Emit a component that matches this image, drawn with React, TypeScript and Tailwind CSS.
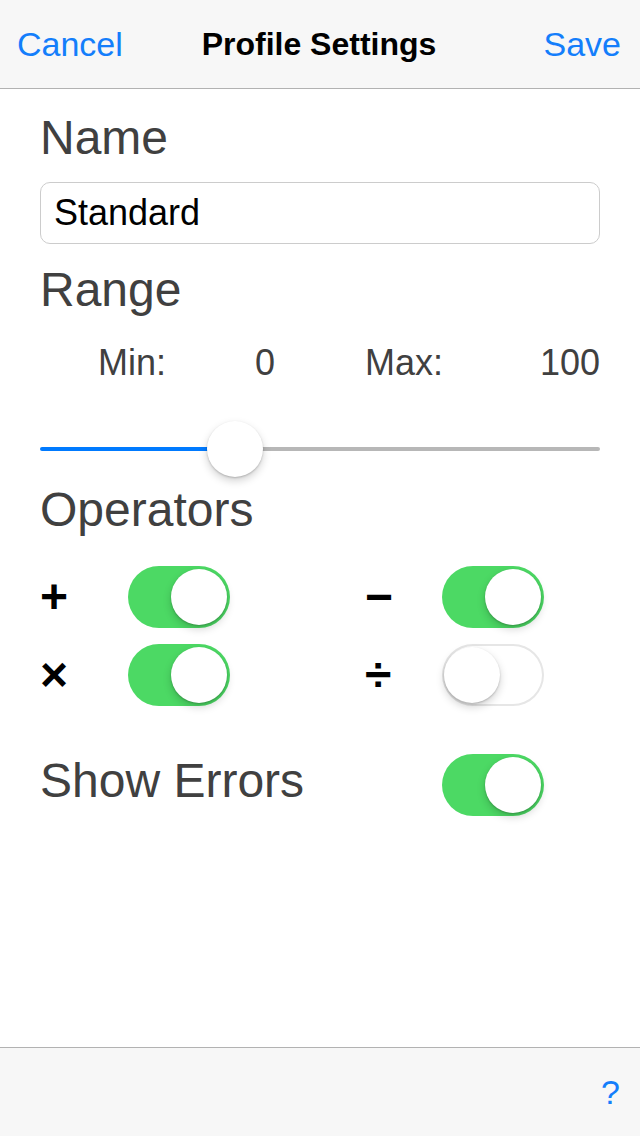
import React from "react"

type ToggleProps = { on: boolean }

function Toggle({ on }: ToggleProps) {
  return (
    <div
      className={`relative h-[62px] w-[102px] flex-shrink-0 rounded-full ${
        on ? "bg-[#4cd964]" : "bg-white shadow-[inset_0_0_0_2px_#e6e6e6]"
      }`}
    >
      <div
        className={`absolute top-[3px] h-[56px] w-[56px] rounded-full bg-white shadow-[0_4px_8px_rgba(0,0,0,0.18),0_1px_2px_rgba(0,0,0,0.2)] ${
          on ? "right-[3px]" : "left-[2px]"
        }`}
      />
    </div>
  )
}

function Symbol({ children }: { children: React.ReactNode }) {
  return (
    <span className="text-[48px] font-bold leading-none text-black">
      {children}
    </span>
  )
}

export default function App() {
  return (
    <div className="flex h-[1136px] w-[640px] flex-col bg-white font-['Liberation_Sans',Arial,sans-serif]">
      {/* Nav bar */}
      <header className="grid h-[89px] grid-cols-[1fr_auto_1fr] items-center border-b border-[#b2b2b2] bg-[#f7f7f7] px-[17px] pr-[19px]">
        <span className="text-[34px] text-[#147efb]">Cancel</span>
        <span className="text-[32px] font-bold text-black">
          Profile Settings
        </span>
        <span className="text-right text-[34px] text-[#147efb]">Save</span>
      </header>

      <main className="flex flex-1 flex-col px-[40px]">
        {/* Name */}
        <h2 className="mt-[25px] text-[48px] leading-none text-[#404040]">
          Name
        </h2>
        <div className="mt-[20px] flex h-[62px] items-center rounded-[10px] border border-[#cccccc] pl-[13px]">
          <span className="text-[36px] leading-none text-black">Standard</span>
        </div>

        {/* Range */}
        <h2 className="mt-[22px] text-[48px] leading-none text-[#404040]">
          Range
        </h2>
        <div className="mt-[31px] flex pl-[58px] text-[36px] leading-none text-[#404040]">
          <span className="w-[157px]">Min:</span>
          <span className="w-[110px]">0</span>
          <span className="flex-1">Max:</span>
          <span>100</span>
        </div>

        <div className="relative mt-[40px] flex h-[56px] items-center">
          <div className="h-[4px] w-[195px] rounded-l-full bg-[#007aff]" />
          <div className="h-[4px] flex-1 rounded-r-full bg-[#b7b7b7]" />
          <div className="absolute left-[167px] top-0 h-[56px] w-[56px] rounded-full bg-white shadow-[0_4px_8px_rgba(0,0,0,0.18),0_1px_2px_rgba(0,0,0,0.2)]" />
        </div>

        {/* Operators */}
        <h2 className="mt-[9px] text-[48px] leading-none text-[#404040]">
          Operators
        </h2>
        <div className="mt-[32px] grid grid-cols-[88px_237px_77px_auto] items-center gap-y-[16px]">
          <Symbol>+</Symbol>
          <Toggle on />
          <Symbol>−</Symbol>
          <Toggle on />
          <Symbol>×</Symbol>
          <Toggle on />
          <Symbol>÷</Symbol>
          <Toggle on={false} />
        </div>

        {/* Show Errors */}
        <div className="mt-[48px] flex items-center">
          <span className="w-[402px] pb-[8px] text-[48px] leading-none text-[#404040]">
            Show Errors
          </span>
          <Toggle on />
        </div>
      </main>

      {/* Bottom toolbar */}
      <footer className="flex h-[89px] items-center justify-end border-t border-[#b2b2b2] bg-[#f7f7f7] pr-[20px]">
        <span className="text-[34px] text-[#147efb]">?</span>
      </footer>
    </div>
  )
}
